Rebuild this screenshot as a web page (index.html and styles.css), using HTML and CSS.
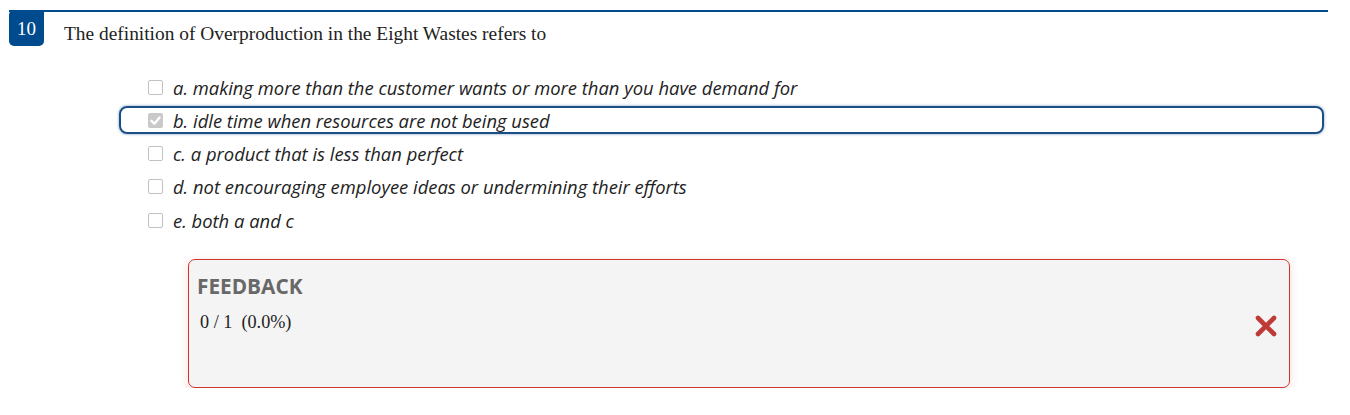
FILE: index.html
```html
<!DOCTYPE html>
<html lang="en">
<head>
  <meta charset="UTF-8" />
  <title>Question 10</title>
  <link rel="stylesheet" href="styles.css">
</head>
<body>
  <div class="que">
    <div class="que-head">
      <div class="que-num">10</div>
      <div class="que-text">The definition of Overproduction in the Eight Wastes refers to</div>
    </div>

    <div class="answers">
      <label class="answer">
        <span class="box"></span>
        <span class="label">a. making more than the customer wants or more than you have demand for</span>
      </label>
      <label class="answer selected">
        <span class="box checked">
          <svg viewBox="0 0 14 14" width="14" height="14"><path d="M3.2 7.3 L6 10 L10.8 4.2" fill="none" stroke="#fff" stroke-width="2.2" stroke-linecap="round" stroke-linejoin="round"/></svg>
        </span>
        <span class="label">b. idle time when resources are not being used</span>
      </label>
      <label class="answer">
        <span class="box"></span>
        <span class="label">c. a product that is less than perfect</span>
      </label>
      <label class="answer">
        <span class="box"></span>
        <span class="label">d. not encouraging employee ideas or undermining their efforts</span>
      </label>
      <label class="answer">
        <span class="box"></span>
        <span class="label">e. both a and c</span>
      </label>
    </div>

    <div class="feedback">
      <div class="feedback-body">
        <div class="feedback-title">FEEDBACK</div>
        <div class="feedback-score">0 / 1&nbsp; (0.0%)</div>
      </div>
      <svg class="wrong" viewBox="0 0 24 24" width="24" height="24">
        <path d="M4 4 L20 20 M20 4 L4 20" fill="none" stroke="#bf3a36" stroke-width="4.6" stroke-linecap="round"/>
      </svg>
    </div>
  </div>
</body>
</html>
```

FILE: styles.css
```css
body {
  margin: 0;
  background: #fff;
  font-family: "Liberation Serif", serif;
  color: #222;
}
.que {
  margin: 10px 22px 0 9px;
}
.que-head {
  display: flex;
  align-items: flex-start;
  border-top: 2px solid #004b8d;
}
.que-num {
  width: 35px;
  height: 36px;
  margin-top: -2px;
  background: #004b8d;
  color: #fff;
  font-size: 19px;
  line-height: 38px;
  text-align: center;
  border-radius: 5px 0 5px 5px;
}
.que-text {
  margin-left: 20px;
  margin-top: 11px;
  font-size: 19.4px;
  line-height: 22px;
  color: #222;
}
.answers {
  display: flex;
  flex-direction: column;
  gap: 5.3px;
  margin: 27px 4px 0 110px;
}
.answer {
  display: flex;
  align-items: center;
  height: 28px;
  box-sizing: border-box;
  padding-left: 27px;
  border: 2px solid transparent;
  border-radius: 8px;
  font-family: "Open Sans", sans-serif;
  font-style: italic;
  font-size: 18.4px;
  color: #222;
}
.answer.selected {
  border-color: #1b4e87;
  box-shadow: 0 0 3px rgba(0, 75, 141, 0.55);
}
.box {
  width: 15px;
  height: 15px;
  box-sizing: border-box;
  border: 1px solid #c2c2c2;
  border-radius: 2px;
  background: #fff;
  margin-right: 10px;
  display: flex;
}
.box.checked {
  background: #c9c9c9;
  border-color: #c9c9c9;
}
.box svg {
  margin: -1px;
  width: 15px;
  height: 15px;
}
.feedback {
  display: flex;
  align-items: center;
  justify-content: space-between;
  margin: 25px 38px 0 179px;
  height: 129px;
  box-sizing: border-box;
  padding: 0 11px 0 8px;
  background: #f4f4f4;
  border: 1px solid #d0352c;
  border-radius: 7px;
  box-shadow: 0 2px 10px rgba(208, 53, 44, 0.18);
}
.feedback-body {
  align-self: flex-start;
  padding-top: 14px;
}
.feedback-title {
  font-family: "Open Sans", sans-serif;
  font-weight: bold;
  font-size: 20.8px;
  color: #686868;
  line-height: 24px;
}
.feedback-score {
  margin-top: 14px;
  padding-left: 3px;
  font-size: 18.2px;
  color: #222;
}
.wrong {
  margin-top: 4px;
}
```
